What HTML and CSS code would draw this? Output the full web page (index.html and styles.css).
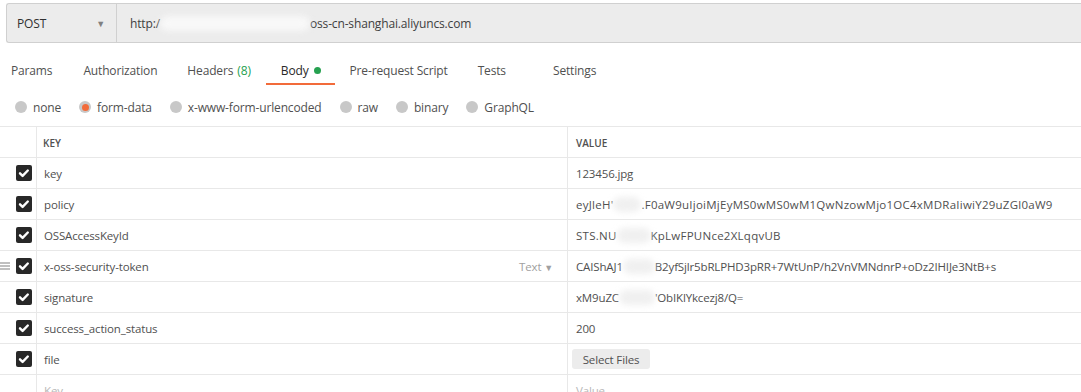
FILE: index.html
```html
<!DOCTYPE html>
<html lang="en">
<head>
    <meta charset="UTF-8">
    <title>Request Builder</title>
    <link rel="stylesheet" href="styles.css">
</head>
<body>

    <!-- Barra de URL -->
    <div class="url-bar">
        <div class="method">
            <span>POST</span>
            <span class="caret">&#9660;</span>
        </div>
        <div class="url">http:/<span class="smudge smudge-url"></span>oss-cn-shanghai.aliyuncs.com</div>
    </div>

    <!-- Abas -->
    <div class="tabs">
        <div class="tab">Params</div>
        <div class="tab">Authorization</div>
        <div class="tab">Headers <span class="count">(8)</span></div>
        <div class="tab active">Body <span class="dot"></span></div>
        <div class="tab">Pre-request Script</div>
        <div class="tab">Tests</div>
        <div class="tab settings">Settings</div>
    </div>

    <!-- Tipo de body -->
    <div class="body-types">
        <label class="option"><span class="radio"></span>none</label>
        <label class="option"><span class="radio checked"></span>form-data</label>
        <label class="option"><span class="radio"></span>x-www-form-urlencoded</label>
        <label class="option"><span class="radio"></span>raw</label>
        <label class="option"><span class="radio"></span>binary</label>
        <label class="option"><span class="radio"></span>GraphQL</label>
    </div>

    <!-- Tabela form-data -->
    <div class="table">
        <div class="row head">
            <div class="cell check"></div>
            <div class="cell key">KEY</div>
            <div class="cell value">VALUE</div>
        </div>

        <div class="row">
            <div class="cell check"><span class="box"><svg viewBox="0 0 16 16"><path d="M4 8.3l2.6 2.6 5.2-5.4"/></svg></span></div>
            <div class="cell key">key</div>
            <div class="cell value">123456.jpg</div>
        </div>

        <div class="row">
            <div class="cell check"><span class="box"><svg viewBox="0 0 16 16"><path d="M4 8.3l2.6 2.6 5.2-5.4"/></svg></span></div>
            <div class="cell key">policy</div>
            <div class="cell value wide">eyJleH'<span class="smudge" style="width:28px"></span>.F0aW9uIjoiMjEyMS0wMS0wM1QwNzowMjo1OC4xMDRaIiwiY29uZGl0aW9</div>
        </div>

        <div class="row">
            <div class="cell check"><span class="box"><svg viewBox="0 0 16 16"><path d="M4 8.3l2.6 2.6 5.2-5.4"/></svg></span></div>
            <div class="cell key">OSSAccessKeyId</div>
            <div class="cell value wide">STS.NU<span class="smudge" style="width:34px"></span>KpLwFPUNce2XLqqvUB</div>
        </div>

        <div class="row">
            <div class="cell check">
                <svg class="handle" viewBox="0 0 10 8"><path d="M0 1h10M0 4h10M0 7h10"/></svg>
                <span class="box"><svg viewBox="0 0 16 16"><path d="M4 8.3l2.6 2.6 5.2-5.4"/></svg></span>
            </div>
            <div class="cell key">
                <span>x-oss-security-token</span>
                <span class="type">Text <span class="type-caret">&#9660;</span></span>
            </div>
            <div class="cell value">CAIShAJ1<span class="smudge" style="width:32px"></span>B2yfSjlr5bRLPHD3pRR+7WtUnP/h2VnVMNdnrP+oDz2IHIJe3NtB+s</div>
        </div>

        <div class="row">
            <div class="cell check"><span class="box"><svg viewBox="0 0 16 16"><path d="M4 8.3l2.6 2.6 5.2-5.4"/></svg></span></div>
            <div class="cell key">signature</div>
            <div class="cell value">xM9uZC<span class="smudge" style="width:36px"></span>'ObIKlYkcezj8/Q=</div>
        </div>

        <div class="row">
            <div class="cell check"><span class="box"><svg viewBox="0 0 16 16"><path d="M4 8.3l2.6 2.6 5.2-5.4"/></svg></span></div>
            <div class="cell key">success_action_status</div>
            <div class="cell value">200</div>
        </div>

        <div class="row">
            <div class="cell check"><span class="box"><svg viewBox="0 0 16 16"><path d="M4 8.3l2.6 2.6 5.2-5.4"/></svg></span></div>
            <div class="cell key">file</div>
            <div class="cell value"><button class="select-files">Select Files</button></div>
        </div>

        <div class="row">
            <div class="cell check"></div>
            <div class="cell key placeholder">Key</div>
            <div class="cell value placeholder">Value</div>
        </div>
    </div>

</body>
</html>
```

FILE: styles.css
```css
:root {
    --text-color: #505050;
    --muted-color: #a0a0a0;
    --placeholder-color: #b8b8b8;
    --bar-background: #ececec;
    --bar-border: #d0d0d0;
    --grid-line: #e8e8e8;
    --accent: #f26b3a;
    --green: #26a150;
}

body {
    margin: 0;
    font-family: 'Open Sans', 'Noto Sans', sans-serif;
    font-size: 11.5px;
    letter-spacing: -0.15px;
    color: var(--text-color);
    background-color: #fff;
    overflow: hidden;
}

/* Barra de URL */
.url-bar {
    display: flex;
    height: 38px;
    margin: 3px 0 0 6px;
    background-color: var(--bar-background);
    border: 1px solid var(--bar-border);
    border-right: none;
    border-radius: 3px 0 0 3px;
    font-size: 12px;
}

.method {
    width: 110px;
    box-sizing: border-box;
    padding: 0 11px 0 10px;
    display: flex;
    align-items: center;
    justify-content: space-between;
    border-right: 1px solid var(--bar-border);
    color: #303030;
}

.caret {
    font-size: 9px;
    color: #808080;
}

.url {
    display: flex;
    align-items: center;
    padding-left: 13px;
    color: #404040;
}

.smudge {
    display: inline-block;
    width: 40px;
    height: 15px;
    background-color: #f0f0f0;
    border-radius: 8px;
    filter: blur(3px);
}

.smudge-url {
    width: 150px;
    background-color: #f8f8f8;
}

/* Abas */
.tabs {
    display: flex;
    margin-top: 12px;
    font-size: 12px;
}

.tab {
    height: 26px;
    padding: 2px 15px 0;
    display: flex;
    align-items: center;
    gap: 4px;
    border-bottom: 2px solid transparent;
    color: var(--text-color);
}

.tab:first-child {
    padding-left: 11px;
    padding-right: 16px;
}

.tab.active {
    color: #282828;
    padding: 2px 14px 0 15px;
    border-bottom-color: var(--accent);
}

.tab.settings {
    margin-left: 17px;
}

.count {
    color: var(--green);
}

.dot {
    width: 7px;
    height: 7px;
    border-radius: 50%;
    background-color: var(--green);
    margin-left: 1px;
}

/* Tipo de body */
.body-types {
    display: flex;
    gap: 18px;
    height: 20px;
    margin-top: 12px;
    padding-left: 15px;
    font-size: 12px;
}

.option {
    display: flex;
    align-items: center;
    gap: 6px;
}

.radio {
    width: 12px;
    height: 12px;
    border-radius: 50%;
    background-color: #c8c8c8;
    display: flex;
    align-items: center;
    justify-content: center;
}

.radio.checked::after {
    content: '';
    width: 7px;
    height: 7px;
    border-radius: 50%;
    background-color: var(--accent);
}

/* Tabela */
.table {
    margin-top: 9px;
    border-top: 1px solid var(--grid-line);
}

.row {
    display: grid;
    grid-template-columns: 37px 531px 1fr;
    height: 30px;
    border-bottom: 1px solid var(--grid-line);
}

.cell {
    display: flex;
    align-items: center;
    border-right: 1px solid var(--grid-line);
    white-space: nowrap;
    overflow: hidden;
}

.cell:last-child {
    border-right: none;
}

.cell.check {
    justify-content: flex-end;
    padding-right: 4px;
    position: relative;
}

.cell.key {
    padding-left: 7px;
    padding-right: 14px;
    justify-content: space-between;
}

.cell.value {
    padding-left: 8px;
}

.cell.value.wide {
    letter-spacing: 0.25px;
}

.head .cell {
    font-size: 10px;
    font-weight: 600;
    letter-spacing: 0;
    color: #505050;
    padding-top: 1px;
}

.head .key {
    padding-left: 6px;
}

.box {
    width: 16px;
    height: 16px;
    border-radius: 2px;
    background-color: #282828;
    display: flex;
}

.box svg {
    width: 16px;
    height: 16px;
    fill: none;
    stroke: #fff;
    stroke-width: 2.4;
    stroke-linecap: round;
    stroke-linejoin: round;
}

.handle {
    position: absolute;
    left: 0;
    top: 11px;
    width: 10px;
    height: 8px;
    stroke: #808080;
    stroke-width: 1.2;
}

.type {
    color: var(--muted-color);
}

.type-caret {
    font-size: 9px;
}

.select-files {
    margin-left: -4px;
    width: 78px;
    height: 20px;
    padding: 0;
    border: none;
    border-radius: 3px;
    background-color: var(--bar-background);
    font-family: inherit;
    font-size: 11.5px;
    letter-spacing: -0.15px;
    color: var(--text-color);
}

.placeholder {
    color: var(--placeholder-color);
}
```
